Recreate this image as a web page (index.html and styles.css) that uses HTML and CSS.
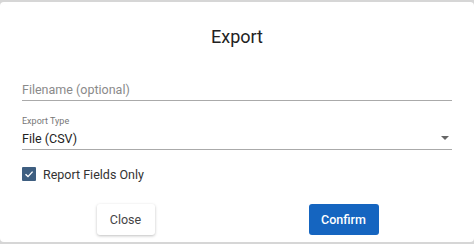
FILE: index.html
```html
<!DOCTYPE html>
<html lang="en">
<head>
<meta charset="UTF-8">
<meta name="viewport" content="width=device-width, initial-scale=1.0">
<title>Export</title>
<link rel="stylesheet" href="styles.css">
</head>
<body>
  <div class="dialog">
    <h2 class="dialog-title">Export</h2>

    <div class="field">
      <input type="text" class="text-input" placeholder="Filename (optional)">
    </div>

    <div class="field select-field">
      <label class="field-label">Export Type</label>
      <div class="select-box">
        <span class="select-value">File (CSV)</span>
        <span class="select-arrow"></span>
      </div>
    </div>

    <label class="check-row">
      <span class="check-box">
        <svg width="10" height="10" viewBox="0 0 10 10"><path d="M1.5 5.2 L4 7.6 L8.6 2.6" fill="none" stroke="#fff" stroke-width="1.4"/></svg>
      </span>
      <span class="check-text">Report Fields Only</span>
    </label>

    <div class="actions">
      <div class="action-cell"><button class="btn btn-close">Close</button></div>
      <div class="action-cell"><button class="btn btn-confirm">Confirm</button></div>
    </div>
  </div>
</body>
</html>
```

FILE: styles.css
```css
html, body {
  margin: 0;
  height: 100%;
}
body {
  background-color: #d6d6d6;
  font-family: Roboto, "Liberation Sans", sans-serif;
  padding-top: 2px;
  box-sizing: border-box;
  overflow: hidden;
}
.dialog {
  background-color: #fff;
  height: 240px;
  border-radius: 4px;
  padding: 0 22px;
  box-sizing: border-box;
}
.dialog-title {
  margin: 0;
  padding-top: 24px;
  height: 22px;
  line-height: 22px;
  font-size: 18px;
  font-weight: 400;
  text-align: center;
  color: #222;
}
.field {
  border-bottom: 1px solid #aaa;
}
.text-input {
  display: block;
  width: 100%;
  margin-top: 32px;
  padding: 0 0 1px 0;
  border: none;
  outline: none;
  height: 19px;
  font-family: inherit;
  font-size: 12.5px;
  color: #333;
  background: transparent;
}
.text-input::placeholder {
  color: #8a8a8a;
}
.select-field {
  margin-top: 14px;
}
.field-label {
  display: block;
  font-size: 9px;
  line-height: 12px;
  color: #777;
}
.select-box {
  display: flex;
  align-items: center;
  justify-content: space-between;
  height: 22px;
}
.select-value {
  font-size: 12.5px;
  color: #222;
}
.select-arrow {
  width: 0;
  height: 0;
  border-left: 4.5px solid transparent;
  border-right: 4.5px solid transparent;
  border-top: 4.5px solid #666;
  margin-right: 3px;
}
.check-row {
  display: flex;
  align-items: center;
  margin-top: 16px;
  height: 16px;
}
.check-box {
  width: 14px;
  height: 14px;
  border-radius: 1px;
  background-color: #3e5e80;
  display: flex;
  align-items: center;
  justify-content: center;
}
.check-text {
  margin-left: 7px;
  font-size: 12.5px;
  color: #333;
}
.actions {
  display: grid;
  grid-template-columns: 1fr 1fr;
  margin-top: 22px;
}
.action-cell {
  display: flex;
  justify-content: center;
}
.btn {
  height: 31px;
  border: none;
  border-radius: 3px;
  font-family: inherit;
  font-size: 12.5px;
  cursor: pointer;
}
.btn-close {
  width: 58px;
  background-color: #fff;
  color: #444;
  box-shadow: 0 1px 3px rgba(0, 0, 0, 0.25);
  margin-right: 8px;
}
.btn-confirm {
  width: 70px;
  background-color: #1565c0;
  color: #fff;
  font-weight: 500;
  margin-right: 2px;
}
```
